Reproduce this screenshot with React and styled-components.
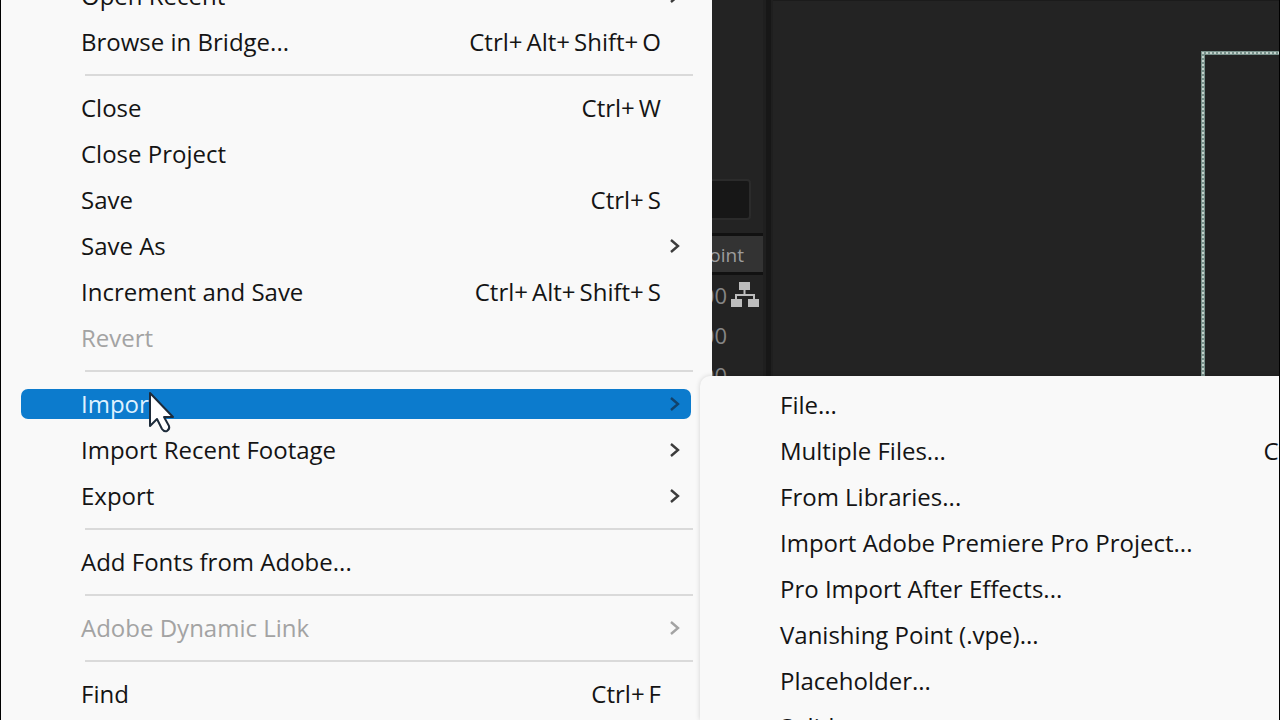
import React from 'react';
import styled, { createGlobalStyle } from 'styled-components'

const GlobalStyle = createGlobalStyle`
  * {
    box-sizing:border-box;
  }
  body {
    margin:0;
    background-color:#000;
    overflow:hidden;
  }
  button {
    font-family:inherit;
  }
`
const Screen = styled.div`
  position:relative;
  display:flex;
  height:100vh;
  margin:0 1px;
  overflow:hidden;
  background-color:#232323;
  font-family:"Open Sans", "Noto Sans", sans-serif;
`
const Panel = styled.aside`
  display:flex;
  flex-direction:column;
  flex:none;
  width:762px;
  padding-top:179px;
`
const SearchBox = styled.input`
  height:41px;
  margin:0 12px 13px 400px;
  padding:0 8px;
  border:2px solid #2b2b2b;
  border-radius:4px;
  background-color:#171717;
  color:#a0a0a0;
`
const ColumnHeader = styled.div`
  height:42px;
  padding-right:19px;
  border-top:3px solid #111;
  border-bottom:3px solid #111;
  background-color:#333;
  color:#9c9c9c;
  font-size:19px;
  line-height:38px;
  text-align:right;
`
const ValueRow = styled.div`
  display:flex;
  align-items:center;
  justify-content:flex-end;
  gap:4px;
  height:40px;
  padding-right:4px;
  color:#858585;
  font-size:22px;
`
const IconSlot = styled.span`
  display:flex;
  width:28px;
`
const Divider = styled.div`
  flex:none;
  width:10px;
  border:solid #1f1f1f;
  border-width:0 2px 0 3px;
  background-color:#171717;
`
const Viewport = styled.main`
  flex:1;
  display:flex;
  padding:50px 0 0 428px;
  border-top:1px solid #1b1b1b;
  overflow:hidden;
`
const CompFrame = styled.div`
  flex:none;
  width:640px;
  height:480px;
  border:4px solid #78908a;
  position:relative;

  &::before {
    content:'';
    position:absolute;
    inset:-3px;
    border:2px dotted #c3d2cc;
  }
`
const Menu = styled.ul`
  position:absolute;
  top:-27px;
  bottom:0;
  left:0;
  width:711px;
  margin:0;
  padding:0;
  list-style:none;
  background-color:#f9f9f9;
`
const SubMenu = styled(Menu)`
  top:376px;
  left:699px;
  width:726px;
  padding-top:6px;
  border-radius:10px 0 0 0;
  box-shadow:0 0 5px rgba(0, 0, 0, 0.16);
`
const MenuRow = styled.li`
  display:flex;
  align-items:center;
  height:46px;
  padding:0 21px 0 20px;
`
const MenuButton = styled.button`
  display:flex;
  align-items:center;
  justify-content:space-between;
  flex:1;
  height:30px;
  padding:0 10px 0 60px;
  border:0;
  border-radius:7px;
  background-color:${props => props.$active ? '#0c7bcd' : 'transparent'};
  color:${props => props.$active ? '#dff1ff' : '#141414'};
  font-size:24px;
  line-height:30px;
  text-align:left;
  white-space:nowrap;

  &:disabled {
    color:#a3a3a3;
  }
`
const Shortcut = styled.span`
  display:flex;
  gap:4px;
  padding-right:20px;
`
const Separator = styled.li`
  height:2px;
  margin:9px 19px 9px 84px;
  background-color:#dadada;
`
const Cursor = styled.svg`
  position:absolute;
  top:390px;
  left:146px;
`

const menuItems = [
  { label: 'Open Recent', more: true },
  { label: 'Browse in Bridge...', keys: ['Ctrl+', 'Alt+', 'Shift+', 'O'] },
  null,
  { label: 'Close', keys: ['Ctrl+', 'W'] },
  { label: 'Close Project' },
  { label: 'Save', keys: ['Ctrl+', 'S'] },
  { label: 'Save As', more: true },
  { label: 'Increment and Save', keys: ['Ctrl+', 'Alt+', 'Shift+', 'S'] },
  { label: 'Revert', disabled: true },
  null,
  { label: 'Import', more: true, active: true },
  { label: 'Import Recent Footage', more: true },
  { label: 'Export', more: true },
  null,
  { label: 'Add Fonts from Adobe...' },
  null,
  { label: 'Adobe Dynamic Link', more: true, disabled: true },
  null,
  { label: 'Find', keys: ['Ctrl+', 'F'] },
]

const importItems = [
  { label: 'File...' },
  { label: 'Multiple Files...', keys: ['Ctrl+', 'Alt+', 'I'] },
  { label: 'From Libraries...' },
  { label: 'Import Adobe Premiere Pro Project...' },
  { label: 'Pro Import After Effects...' },
  { label: 'Vanishing Point (.vpe)...' },
  { label: 'Placeholder...' },
  { label: 'Solid...' },
]

function Chevron({ color }) {
  return (
    <svg width="12" height="16" viewBox="0 0 12 16" fill="none" stroke={color} strokeWidth="2.4">
      <path d="M2 2 L9 8 L2 14" />
    </svg>
  )
}

function FlowchartIcon() {
  return (
    <svg width="28" height="28" viewBox="0 0 28 28" fill="#bdbdbd">
      <path d="M8 1h11v8H8z M0 18h11v8H0z M17 18h11v8H17z" />
      <path d="M13.5 9v5 M5 18v-4h18v4" fill="none" stroke="#bdbdbd" strokeWidth="2" />
    </svg>
  )
}

function MenuItem({ item }) {
  const chevronColor = item.active ? '#12426b' : item.disabled ? '#a3a3a3' : '#3c3c3c'

  return (
    <MenuRow>
      <MenuButton type="button" $active={item.active} disabled={item.disabled}>
        <span>{item.label}</span>
        {item.keys && (
          <Shortcut>
            {item.keys.map(key => <span key={key}>{key}</span>)}
          </Shortcut>
        )}
        {item.more && <Chevron color={chevronColor} />}
      </MenuButton>
    </MenuRow>
  )
}

const renderItems = items => items.map((item, i) => (
  item ? <MenuItem key={item.label} item={item} /> : <Separator key={i} role="separator" />
))

export default function App() {
  return (
    <>
      <GlobalStyle />
      <Screen>
        <Panel>
          <SearchBox type="text" aria-label="Search" />
          <ColumnHeader>Point</ColumnHeader>
          <ValueRow>
            <span>00</span>
            <IconSlot><FlowchartIcon /></IconSlot>
          </ValueRow>
          <ValueRow>
            <span>00</span>
            <IconSlot />
          </ValueRow>
          <ValueRow>
            <span>00</span>
            <IconSlot />
          </ValueRow>
        </Panel>
        <Divider />
        <Viewport>
          <CompFrame />
        </Viewport>
        <Menu>{renderItems(menuItems)}</Menu>
        <SubMenu>{renderItems(importItems)}</SubMenu>
        <Cursor width="30" height="44" viewBox="0 0 30 44">
          <path
            d="M3 3 V36 L10 29 L15 39 Q17 42 20 41 Q23 39 22 36 L17 27 H26 Z"
            fill="#fff"
            stroke="#1d2b3a"
            strokeWidth="2"
            strokeLinejoin="round"
          />
        </Cursor>
      </Screen>
    </>
  )
}
